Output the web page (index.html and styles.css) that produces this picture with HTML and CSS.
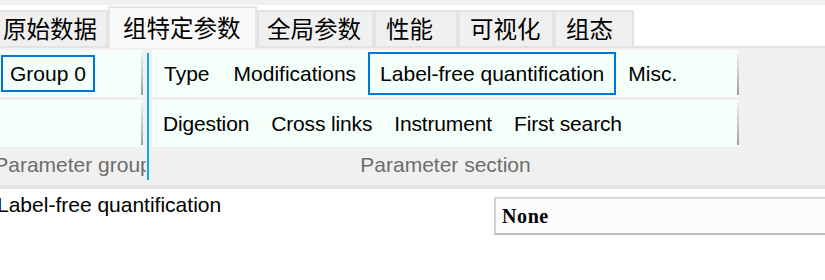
FILE: index.html
```html
<!DOCTYPE html>
<html lang="zh">
<head>
<meta charset="utf-8">
<title>Parameters</title>
<link rel="stylesheet" href="styles.css">
</head>
<body>
<div class="tabstrip">
  <div class="tab tab-raw">原始数据</div>
  <div class="tab tab-group active">组特定参数</div>
  <div class="tab tab-global">全局参数</div>
  <div class="tab tab-perf">性能</div>
  <div class="tab tab-vis">可视化</div>
  <div class="tab tab-config">组态</div>
</div>
<div class="content">
  <div class="group-panel">
    <div class="rows">
      <div class="row row-left"><div class="item selected group-btn">Group 0</div></div>
      <div class="row row-left"></div>
    </div>
    <div class="caption">Parameter group</div>
  </div>
  <div class="splitter"></div>
  <div class="section-panel">
    <div class="rows">
      <div class="row">
        <div class="item">Type</div>
        <div class="item">Modifications</div>
        <div class="item selected">Label-free quantification</div>
        <div class="item">Misc.</div>
      </div>
      <div class="row row-tight">
        <div class="item">Digestion</div>
        <div class="item">Cross links</div>
        <div class="item">Instrument</div>
        <div class="item">First search</div>
      </div>
    </div>
    <div class="caption">Parameter section</div>
  </div>
</div>
<div class="form">
  <div class="form-label">Label-free quantification</div>
  <div class="select">None</div>
</div>
</body>
</html>
```
FILE: styles.css
```css
html, body {
  margin: 0;
  padding: 0;
}
body {
  width: 825px;
  height: 280px;
  overflow: hidden;
  background: #ffffff;
  font-family: "Liberation Sans", Arial, sans-serif;
  font-size: 21px;
  color: #000000;
}

/* ---------- tab strip ---------- */
.tabstrip {
  height: 48px;
  box-sizing: border-box;
  display: flex;
  align-items: flex-end;
  background: linear-gradient(to bottom, #f0f0f0 0, #f0f0f0 5px, #ffffff 5px);
  border-bottom: 2px solid #e3e3e3;
}
.tab {
  box-sizing: border-box;
  height: 36px;
  margin-bottom: -2px;
  position: relative;
  top: -2px;
  display: flex;
  align-items: center;
  background: #f0f0f0;
  border: 2px solid #e3e3e3;
  border-bottom: none;
  font-family: "Noto Sans CJK SC", sans-serif;
  font-size: 23.5px;
  line-height: 1;
  white-space: nowrap;
}
.tab.active {
  height: 42px;
  top: 0;
  margin-bottom: -2px;
  background: #f9f9f9;
  border-color: #e6e6e6;
}
.tab-raw { width: 108px; padding-left: 3px; border-left: none; }
.tab-group { width: 149px; padding-left: 13px; }
.tab-global { width: 117px; padding-left: 8px; }
.tab-perf { width: 84px; padding-left: 10px; }
.tab-vis { width: 96px; padding-left: 10px; }
.tab-config { width: 80px; padding-left: 10px; }

/* ---------- content ---------- */
.content {
  display: flex;
  height: 137px;
  background: #f0f0f0;
  border-bottom: 4px solid #e3e3e3;
}
.group-panel {
  width: 146px;
  display: flex;
  flex-direction: column;
  overflow: hidden;
  padding-top: 2px;
}
.group-panel .rows {
  padding-right: 3px;
}
.rows {
  display: flex;
  flex-direction: column;
  gap: 3px;
}
.row {
  height: 47px;
  display: flex;
  align-items: center;
  background:
    linear-gradient(to bottom, #ececec 0, #c8c8c8 50%, #9e9e9e 100%) right 3px / 2px calc(100% - 5px) no-repeat,
    #f5fffa;
  padding-left: 1px;
}
.row-left {
  padding-left: 1px;
}
.item {
  box-sizing: border-box;
  height: 43px;
  display: flex;
  align-items: center;
  padding: 0 10px;
  border: 2px solid transparent;
  white-space: nowrap;
}
.row-tight .item {
  padding: 0 9px;
  letter-spacing: -0.15px;
}
.item.selected {
  border-color: #0078d7;
}
.group-btn {
  height: 37px;
  padding: 0 7px;
}
.caption {
  flex: 1;
  display: flex;
  justify-content: center;
  align-items: center;
  color: #6d6d6d;
  white-space: nowrap;
  padding-bottom: 2px;
}
.splitter {
  width: 2px;
  margin: 5px 0 5px 1px;
  background: #0fa6ea;
}
.section-panel {
  width: 592px;
  box-sizing: border-box;
  display: flex;
  flex-direction: column;
  padding: 2px 2px 0 3px;
}
.section-panel .row {
  padding-left: 0;
}

/* ---------- form ---------- */
.form {
  display: grid;
  grid-template-columns: 494px 1fr;
  align-items: start;
  padding-top: 4px;
}
.form-label {
  line-height: 24px;
  margin-left: -3px;
  white-space: nowrap;
}
.select {
  box-sizing: border-box;
  height: 38px;
  margin-top: 4px;
  display: flex;
  align-items: center;
  padding-left: 6px;
  background: #fcfcfc;
  border-left: 2px solid #d0d0d0;
  border-top: 2px solid #d8d8d8;
  border-bottom: 2px solid #bdbdbd;
  font-family: "Liberation Serif", "Times New Roman", serif;
  font-weight: bold;
  font-size: 20px;
  letter-spacing: 0.6px;
}
```
